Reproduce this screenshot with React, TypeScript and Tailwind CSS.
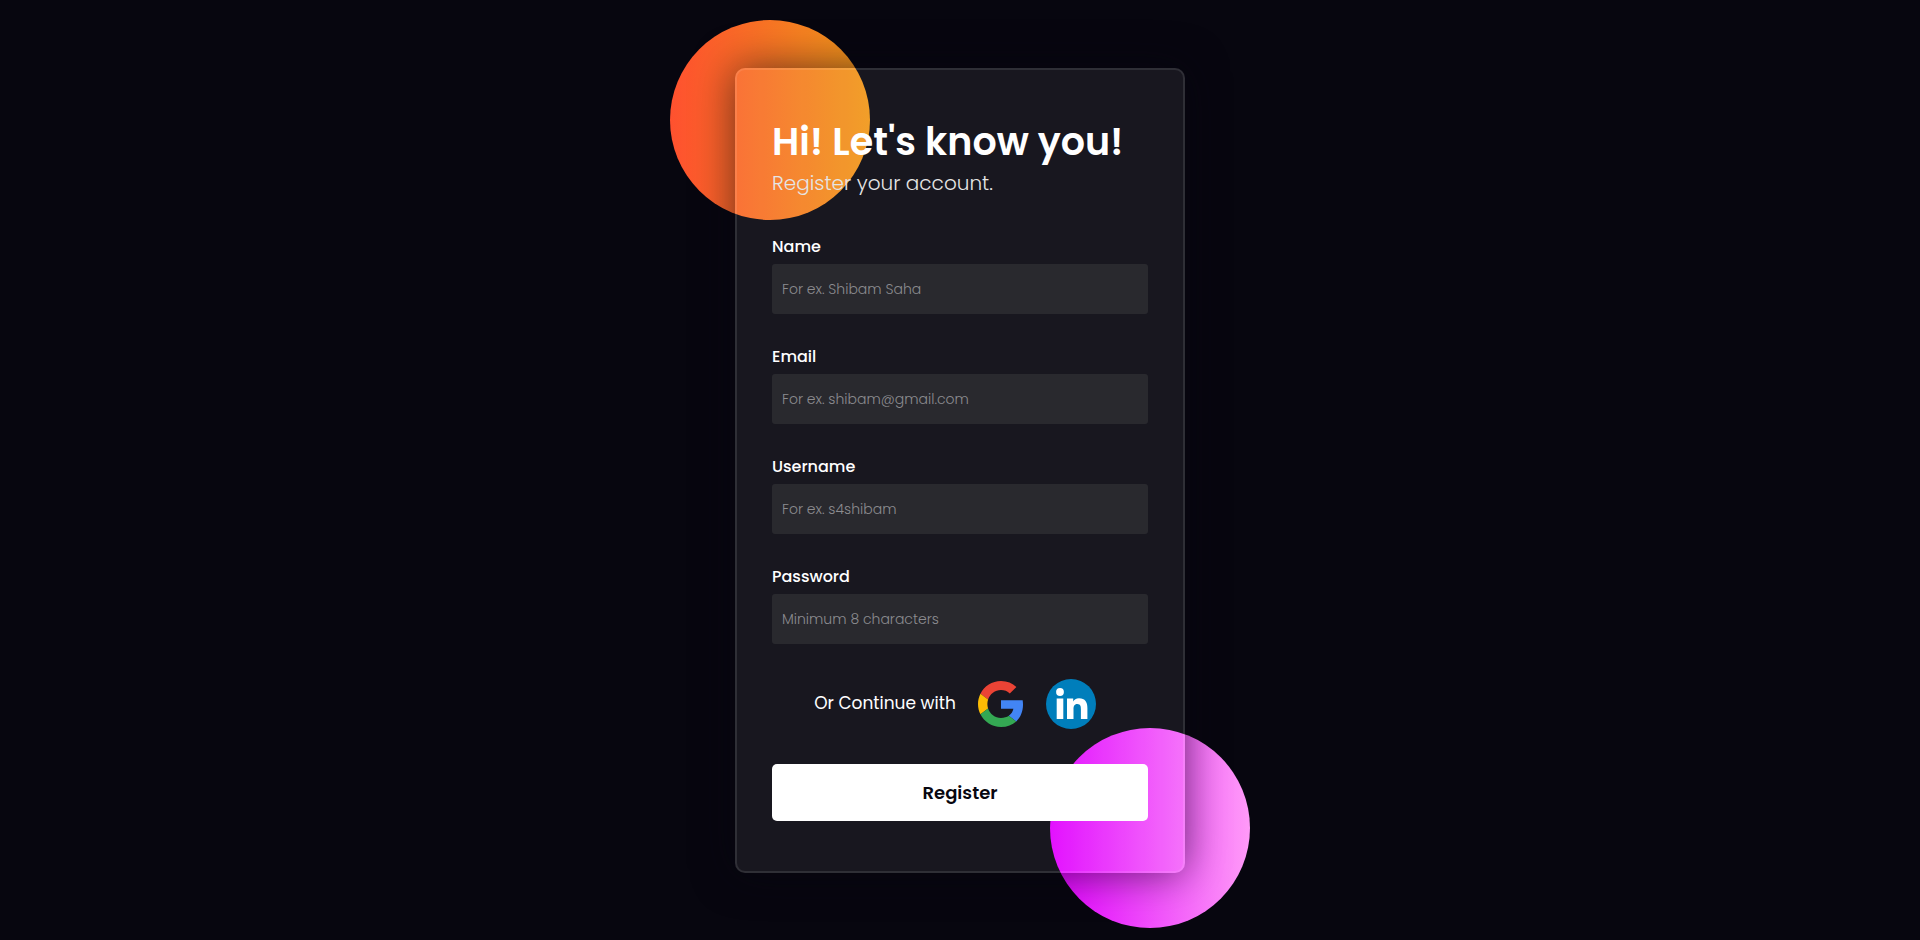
import React from 'react';

interface FieldProps {
  id: string;
  label: string;
  type: string;
  placeholder: string;
}

const fields: FieldProps[] = [
  { id: 'name', label: 'Name', type: 'text', placeholder: 'For ex. Shibam Saha' },
  { id: 'email', label: 'Email', type: 'email', placeholder: 'For ex. shibam@gmail.com' },
  { id: 'username', label: 'Username', type: 'text', placeholder: 'For ex. s4shibam' },
  { id: 'password', label: 'Password', type: 'password', placeholder: 'Minimum 8 characters' },
];

const Field: React.FC<FieldProps> = ({ id, label, type, placeholder }) => {
  return (
    <div>
      <label htmlFor={id} className="mb-1.5 block text-base leading-[22px] font-medium">
        {label}
      </label>
      <input
        id={id}
        name={id}
        type={type}
        placeholder={placeholder}
        className="block h-[50px] w-full rounded-[3px] bg-[#f4ffe8]/8 px-2.5 text-sm font-light text-white outline-none placeholder:text-[#8c8c90]"
      />
    </div>
  );
};

const GoogleIcon = () => (
  <svg viewBox="0 0 48 48" className="size-[46px]" aria-hidden="true">
    <path
      fill="#EA4335"
      d="M24 9.5c3.54 0 6.71 1.22 9.21 3.6l6.85-6.85C35.9 2.38 30.47 0 24 0 14.62 0 6.51 5.38 2.56 13.22l7.98 6.19C12.43 13.72 17.74 9.5 24 9.5z"
    />
    <path
      fill="#4285F4"
      d="M46.98 24.55c0-1.57-.15-3.09-.38-4.55H24v9.02h12.94c-.58 2.96-2.26 5.48-4.78 7.18l7.73 6c4.51-4.18 7.09-10.36 7.09-17.65z"
    />
    <path
      fill="#FBBC05"
      d="M10.53 28.59c-.48-1.45-.76-2.99-.76-4.59s.27-3.14.76-4.59l-7.98-6.19C.92 16.46 0 20.12 0 24c0 3.88.92 7.54 2.56 10.78l7.97-6.19z"
    />
    <path
      fill="#34A853"
      d="M24 48c6.48 0 11.93-2.13 15.89-5.81l-7.73-6c-2.15 1.45-4.92 2.3-8.16 2.3-6.26 0-11.57-4.22-13.47-9.91l-7.98 6.19C6.51 42.62 14.62 48 24 48z"
    />
  </svg>
);

const LinkedInIcon = () => (
  <svg viewBox="0 0 50 50" className="size-[50px]" aria-hidden="true">
    <circle cx="25" cy="25" r="25" fill="#007EBB" />
    <circle cx="14" cy="13" r="3.9" fill="#fff" />
    <path fill="#fff" d="M10.7 19.6h6.6v20.4h-6.6z" />
    <path
      fill="#fff"
      d="M21 19.6h6.2v2.8c.9-1.7 3-3.2 5.8-3.2 6.2 0 8.4 4 8.4 9.7V40h-6.5v-9.8c0-2.4-.1-5.3-3.6-5.3-3 0-3.8 2.4-3.8 5.2V40H21z"
    />
  </svg>
);

const App: React.FC = () => {
  return (
    <main className="flex min-h-screen justify-center overflow-hidden bg-[#07060f] px-4 pt-17 pb-8 font-[Poppins,Inter,sans-serif] text-white">
      <div className="relative w-full max-w-[450px] self-start">
        <div className="absolute -top-12 -left-[65px] size-[200px] rounded-full bg-linear-to-r/srgb from-[#ff512f] to-[#f09819]" />
        <div className="absolute -right-[65px] -bottom-[55px] size-[200px] rounded-full bg-linear-to-r/srgb from-[#e100ff] to-[#ff9af8]" />

        <form
          onSubmit={(e) => e.preventDefault()}
          className="relative rounded-[10px] border-2 border-white/10 bg-[#f8ffff]/7 px-[35px] py-[50px] shadow-[0_0_40px_rgba(8,7,16,0.6)]"
        >
          <h1 className="text-[38px] leading-[44px] font-semibold">Hi! Let's know you!</h1>
          <p className="mt-1 text-xl leading-[30px] font-light text-[#e5e5e5]">Register your account.</p>

          <div className="mt-[38px] flex flex-col gap-8">
            {fields.map((field) => (
              <Field key={field.id} {...field} />
            ))}
          </div>

          <div className="my-[35px] flex items-center justify-center gap-5 pr-2.5">
            <span className="text-[17px]">Or Continue with</span>
            <button type="button" aria-label="Google" className="flex size-[50px] items-center justify-center">
              <GoogleIcon />
            </button>
            <button type="button" aria-label="LinkedIn" className="flex size-[50px] items-center justify-center">
              <LinkedInIcon />
            </button>
          </div>

          <button type="submit" className="h-[57px] w-full rounded-[5px] bg-white text-lg font-semibold text-[#080710]">
            Register
          </button>
        </form>
      </div>
    </main>
  );
};

export default App;
